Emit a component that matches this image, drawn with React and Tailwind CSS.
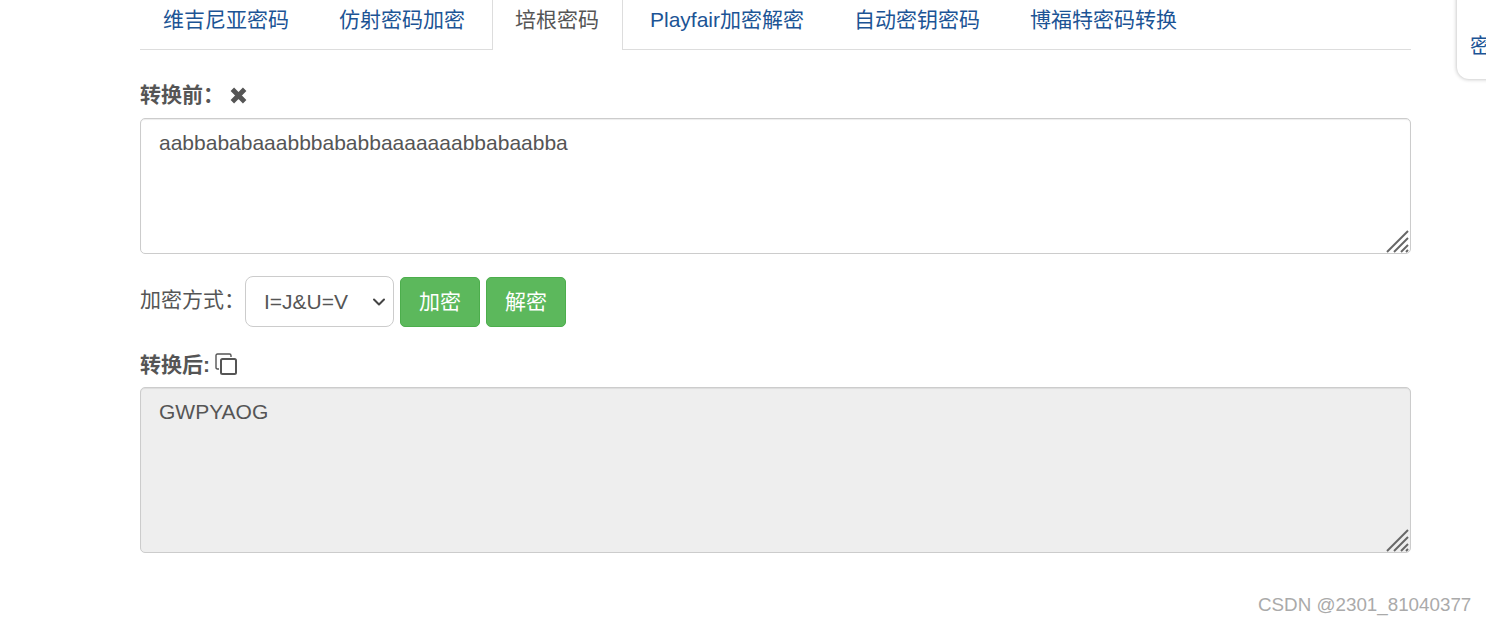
import { ChevronDown } from 'lucide-react'

const font = 'font-["Liberation_Sans","Noto_Sans_CJK_SC",sans-serif]'

function Handle() {
  return (
    <svg width="24" height="24" viewBox="0 0 24 24" className="absolute right-[1px] bottom-[1px] pointer-events-none">
      <g stroke="#666" strokeWidth="2">
        <path d="M1 23 L22 2" />
        <path d="M8 23 L22 9" />
        <path d="M15 23 L22 16" />
        <path d="M20 23 L22 21" />
      </g>
    </svg>
  )
}

function RemoveIcon() {
  return (
    <svg width="17" height="17" viewBox="0 0 16 16" stroke="#555" strokeWidth="4.6" className="ml-[6px] mt-[1px]">
      <path d="M2.2 2.2 L13.8 13.8 M13.8 2.2 L2.2 13.8" />
    </svg>
  )
}

function CopyIcon() {
  return (
    <svg width="22" height="22" viewBox="0 0 22 22" fill="none" stroke="#555" strokeWidth="2" className="-ml-[1px] -mt-[2px]">
      <path d="M4 16 H2.5 Q1 16 1 14.5 V2.5 Q1 1 2.5 1 H14.5 Q16 1 16 2.5 V4" strokeWidth="1.4" />
      <rect x="6" y="6" width="15" height="15" rx="1.5" />
    </svg>
  )
}

const tabs = ['维吉尼亚密码', '仿射密码加密', '培根密码', 'Playfair加密解密', '自动密钥密码', '博福特密码转换']

export default function App() {
  return (
    <div className={`relative h-[624px] w-[1486px] overflow-hidden bg-white text-[#555] ${font}`}>
      <div className="ml-[140px] w-[1271px]">
        {/* Tabs */}
        <div className="flex h-[50px] border-b border-[#ddd] text-[21px]">
          {tabs.map(t => t === '培根密码' ? (
            <div key={t} className="mr-[4px] h-[50px] border-x border-[#ddd] bg-white pl-[22px] pr-[23px] pt-[3px] leading-[34px] text-[#555]">{t}</div>
          ) : (
            <div key={t} className="mr-[2px] border-x border-transparent pl-[22px] pr-[24px] pt-[3px] leading-[34px] text-[#1c5495]">{t}</div>
          ))}
        </div>

        {/* Input */}
        <div className="mt-[30px] flex h-[30px] items-center text-[21px] font-bold leading-[30px]">
          <span>转换前：</span>
          <RemoveIcon />
        </div>
        <div className="relative mt-[8px] h-[136px]">
          <textarea
            readOnly
            className={`block h-full w-full resize-none rounded-[5px] border border-[#ccc] px-[18px] py-[10px] text-[21px] leading-[28px] text-[#555] shadow-[inset_0_1px_1px_rgba(0,0,0,0.075)] outline-none ${font}`}
            value="aabbababaaabbbababbaaaaaaabbabaabba"
          />
          <Handle />
        </div>

        {/* Controls */}
        <div className="mt-[22px] flex h-[51px] items-center">
          <span className="mb-[3px] w-[105px] whitespace-nowrap text-[21px]">加密方式：</span>
          <div className="relative h-[51px] w-[149px]">
            <select className={`h-full w-full appearance-none rounded-[8px] border border-[#ccc] bg-white pl-[18px] text-[21px] text-[#555] outline-none ${font}`}>
              <option>I=J&amp;U=V</option>
            </select>
            <ChevronDown size={20} strokeWidth={2.4} className="absolute right-[5px] top-[16px] pointer-events-none text-[#444]" />
          </div>
          <button className="ml-[6px] mt-[1px] h-[50px] w-[80px] rounded-[5px] border border-[#4cae4c] bg-[#5cb85c] text-[21px] text-white">加密</button>
          <button className="ml-[6px] mt-[1px] h-[50px] w-[80px] rounded-[5px] border border-[#4cae4c] bg-[#5cb85c] text-[21px] text-white">解密</button>
        </div>

        {/* Output */}
        <div className="mt-[23px] flex h-[30px] items-center gap-[6px] text-[21px] font-bold leading-[30px]">
          <span>转换后:</span>
          <CopyIcon />
        </div>
        <div className="relative mt-[7px] h-[166px]">
          <textarea
            readOnly
            className={`block h-full w-full resize-none rounded-[5px] border border-[#ccc] bg-[#eee] px-[18px] py-[10px] text-[21px] leading-[28px] text-[#555] shadow-[inset_0_1px_1px_rgba(0,0,0,0.075)] outline-none ${font}`}
            value="GWPYAOG"
          />
          <Handle />
        </div>
      </div>

      {/* Floating side card */}
      <div className="absolute left-[1457px] top-[-20px] h-[99px] w-[60px] rounded-[12px] bg-white pl-[13px] pt-[51px] text-[21px] leading-[30px] text-[#1c5495] shadow-[0_0_4px_rgba(0,0,0,0.3)]">密</div>

      {/* Watermark */}
      <div className="absolute left-[1258px] top-[594px] text-[18.8px] leading-[22px] text-[#aaa]">CSDN @2301_81040377</div>
    </div>
  )
}
